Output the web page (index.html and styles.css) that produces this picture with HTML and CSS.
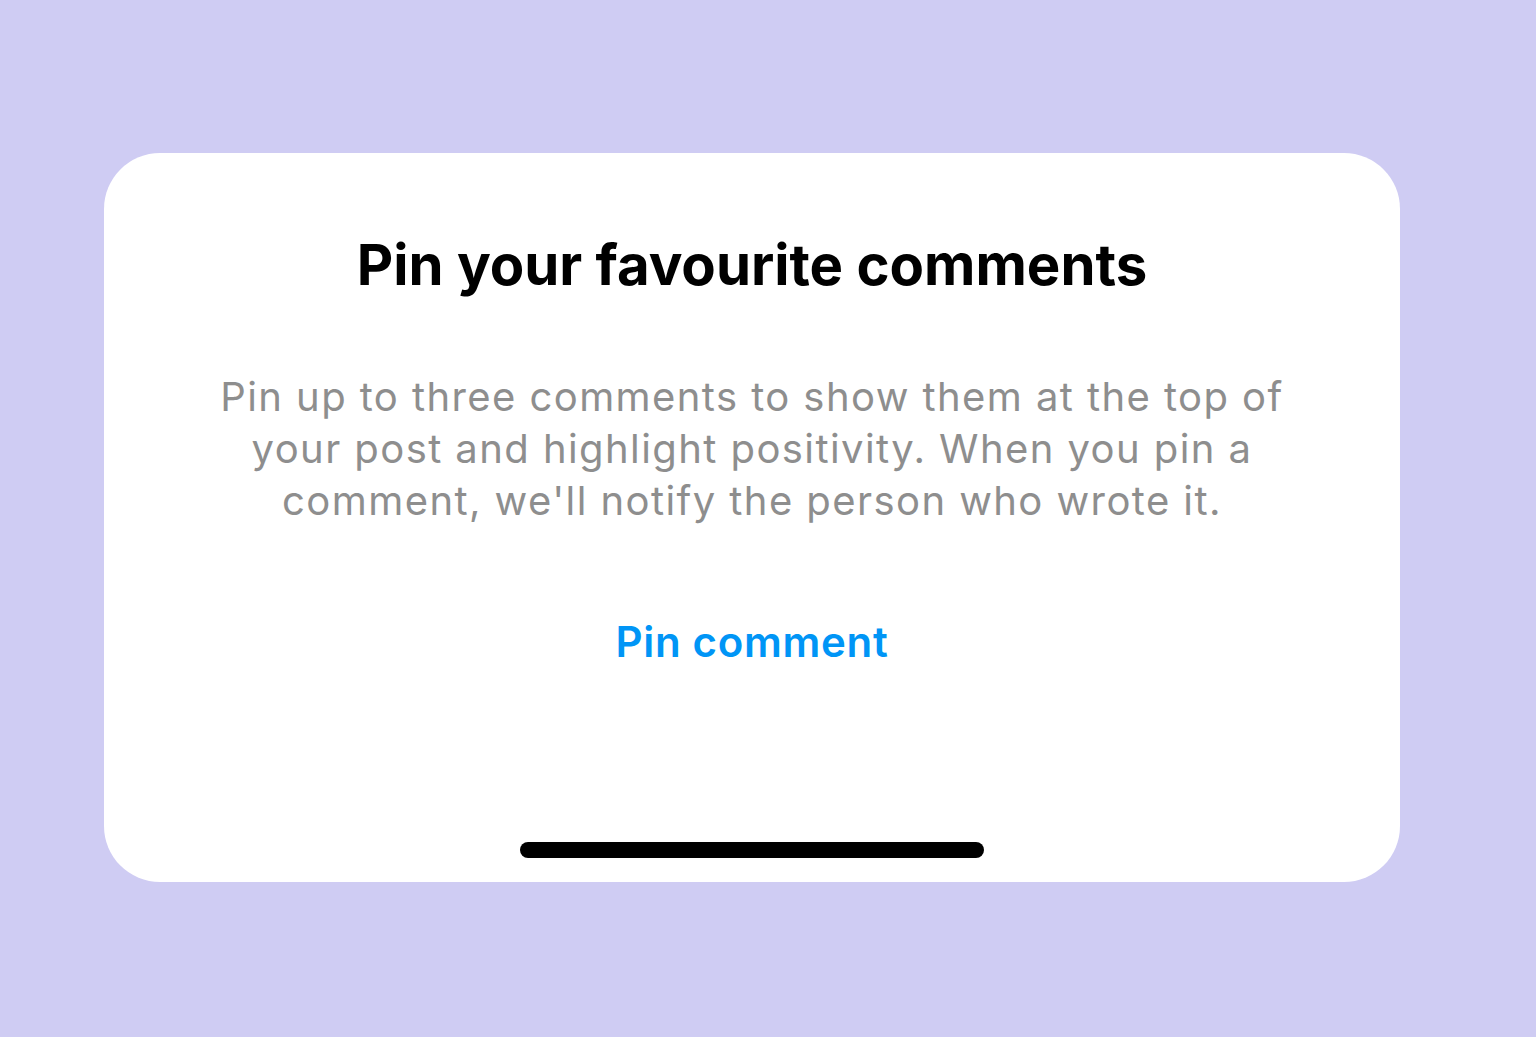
FILE: index.html
```html
<!DOCTYPE html>
<html>
<head>
<meta charset="utf-8">
<link rel="stylesheet" href="styles.css">
</head>
<body>
<div class="page">
  <div class="sheet">
    <h1 class="title">Pin your favourite comments</h1>
    <p class="desc">Pin up to three comments to show them at the top of your post and highlight positivity. When you pin a comment, we'll notify the person who wrote it.</p>
    <div class="action">Pin comment</div>
    <div class="spacer"></div>
    <div class="home-bar"></div>
  </div>
</div>
</body>
</html>
```
FILE: styles.css
```css
html, body {
  margin: 0;
  padding: 0;
  background: #cfccf3;
}
.page {
  width: 1536px;
  height: 1037px;
  padding: 153px 0 0 104px;
  box-sizing: border-box;
  font-family: Inter, "Noto Sans", sans-serif;
}
.sheet {
  width: 1296px;
  height: 729px;
  background: #ffffff;
  border-radius: 56px;
  display: flex;
  flex-direction: column;
  align-items: center;
  box-sizing: border-box;
  padding: 77px 0 24px;
}
.title {
  margin: 0;
  font-size: 56.3px;
  line-height: 70px;
  font-weight: 700;
  color: #000;
}
.desc {
  margin: 71px 0 0;
  width: 1100px;
  text-align: center;
  font-size: 40px;
  line-height: 52px;
  letter-spacing: 1.42px;
  color: #8e8e8e;
  font-weight: 400;
}
.action {
  margin-top: 89px;
  font-size: 42px;
  line-height: 52px;
  font-weight: 600;
  letter-spacing: 0.7px;
  color: #0095f6;
}
.spacer { flex: 1; }
.home-bar {
  width: 464px;
  height: 16px;
  border-radius: 8px;
  background: #000;
}
```
